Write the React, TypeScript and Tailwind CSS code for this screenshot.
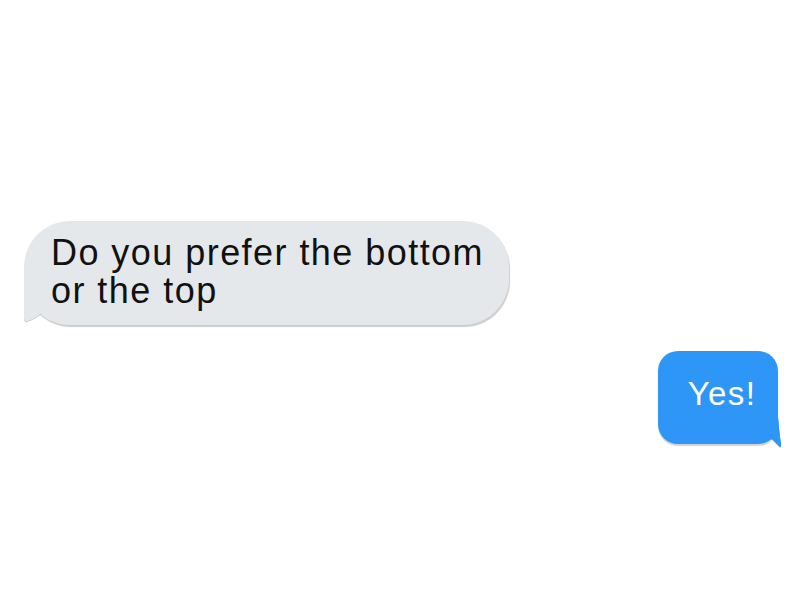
const font = { fontFamily: '"Liberation Sans", Arial, sans-serif' };

const grayTail = "M0 0 L0 34 Q0 39 3 38 Q14 35 22 25 L30 0 Z";
const blueTail = "M0 0 L10 0 Q11 14 13 28 Q13 30 12 30 Q8 26 4 22 L0 22 Z";

function IncomingBubble({ children }: { children: React.ReactNode }) {
  return (
    <div className="relative ml-[24px] w-[485px] h-[104px]">
      <svg
        className="absolute left-0 bottom-[2px] w-[30px] h-[40px] overflow-visible drop-shadow-[0_1.5px_0.5px_rgba(0,0,0,0.22)]"
        viewBox="0 0 30 40"
      >
        <path d={grayTail} fill="#e5e8eb" />
      </svg>
      <div className="relative h-full w-full rounded-[46px] bg-[#e5e8eb] shadow-[1px_2px_1px_rgba(0,0,0,0.2)] pl-[27px] pt-[13px]">
        <p
          className="text-[36px] leading-[38px] tracking-[1.45px] text-[#111111]"
          style={font}
        >
          {children}
        </p>
      </div>
      {/* cover shadow seam between tail and bubble */}
      <svg className="absolute left-0 bottom-[2px] w-[30px] h-[40px] overflow-visible" viewBox="0 0 30 40">
        <path d={grayTail} fill="#e5e8eb" />
      </svg>
    </div>
  );
}

function OutgoingBubble({ children }: { children: React.ReactNode }) {
  return (
    <div className="relative ml-auto mr-[22px] w-[120px] h-[93px]">
      <svg
        className="absolute right-[-4px] bottom-[-3px] w-[14px] h-[30px] overflow-visible drop-shadow-[0_1.5px_0.5px_rgba(0,0,0,0.2)]"
        viewBox="0 0 14 30"
      >
        <path d={blueTail} fill="#2d96f6" />
      </svg>
      <div className="relative flex h-full w-full items-center justify-center rounded-[20px] bg-[#2d96f6] pb-2 pl-2 shadow-[0_2px_1px_rgba(0,0,0,0.18)]">
        <span className="text-[33px] leading-[33px] tracking-[1.4px] text-white" style={font}>
          {children}
        </span>
      </div>
      <svg className="absolute right-[-4px] bottom-[-3px] w-[14px] h-[30px] overflow-visible" viewBox="0 0 14 30">
        <path d={blueTail} fill="#2d96f6" />
      </svg>
    </div>
  );
}

export default function App() {
  return (
    <div className="flex h-[600px] w-[800px] flex-col bg-white pt-[221px]">
      <IncomingBubble>
        Do you prefer the bottom
        <br />
        or the top
      </IncomingBubble>
      <div className="mt-[26px]">
        <OutgoingBubble>Yes!</OutgoingBubble>
      </div>
    </div>
  );
}
